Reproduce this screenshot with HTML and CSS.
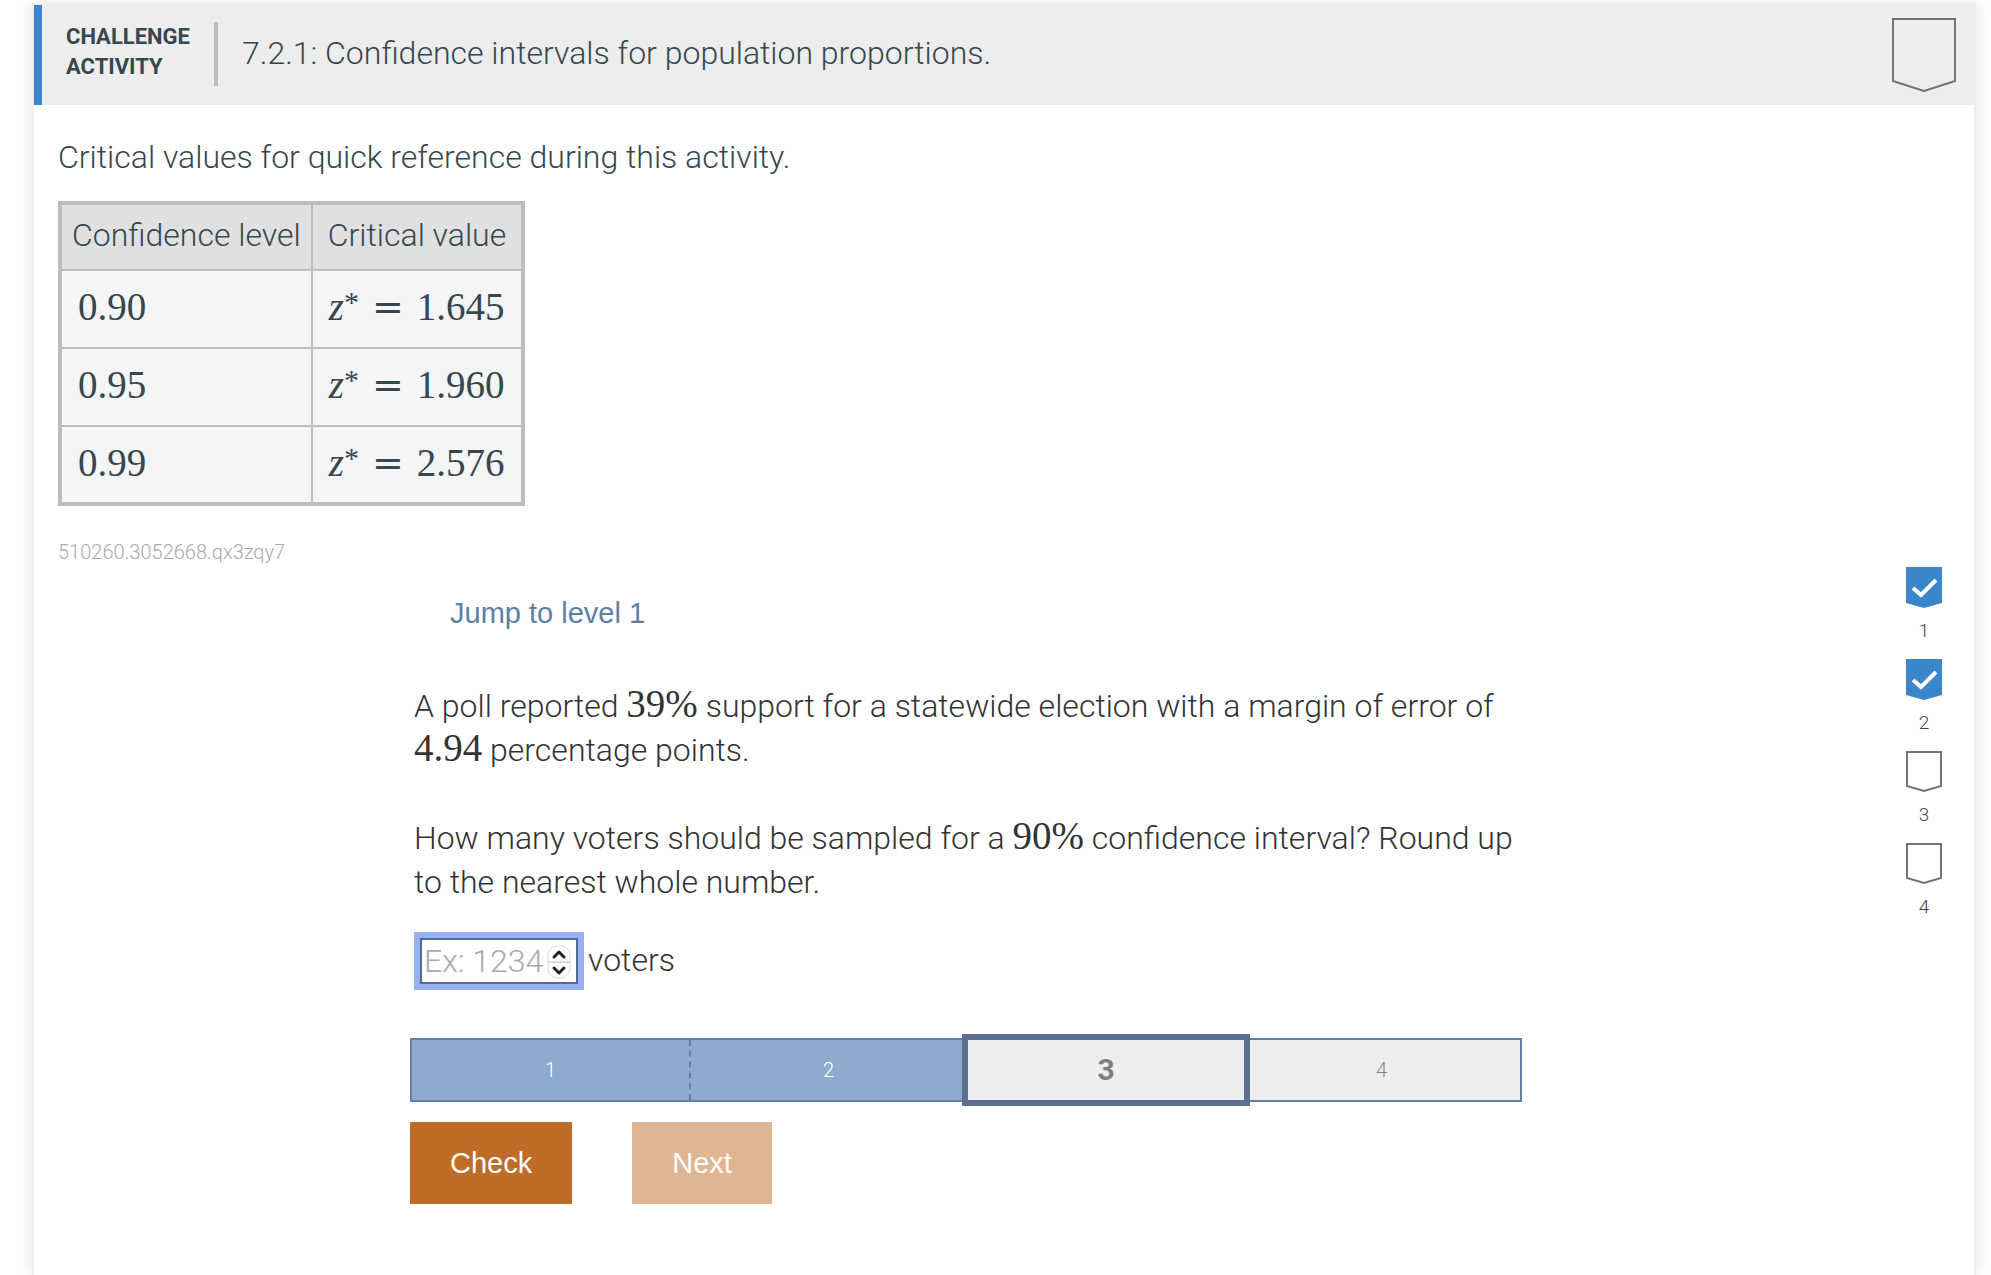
FILE: index.html
```html
<!DOCTYPE html>
<html lang="en">
<head>
    <meta charset="UTF-8">
    <meta name="viewport" content="width=device-width, initial-scale=1.0">
    <title>7.2.1: Confidence intervals for population proportions.</title>
    <link rel="stylesheet" href="styles.css">
</head>
<body>
    <main class="activity-card">
        <header class="activity-header">
            <div class="activity-type">CHALLENGE ACTIVITY</div>
            <h1 class="activity-title">7.2.1: Confidence intervals for population proportions.</h1>
            <svg class="header-chevron" width="64" height="74" viewBox="0 0 64 74">
                <path d="M1 1H63V63L32 73L1 63Z" fill="none" stroke="#757575" stroke-width="2"/>
            </svg>
        </header>

        <div class="activity-body">
            <p class="instructions">Critical values for quick reference during this activity.</p>

            <table class="values-table">
                <thead>
                    <tr><th>Confidence level</th><th>Critical value</th></tr>
                </thead>
                <tbody>
                    <tr>
                        <td><span class="math">0.90</span></td>
                        <td><span class="math"><i>z</i><sup>*</sup><span class="eq">=</span>1.645</span></td>
                    </tr>
                    <tr>
                        <td><span class="math">0.95</span></td>
                        <td><span class="math"><i>z</i><sup>*</sup><span class="eq">=</span>1.960</span></td>
                    </tr>
                    <tr>
                        <td><span class="math">0.99</span></td>
                        <td><span class="math"><i>z</i><sup>*</sup><span class="eq">=</span>2.576</span></td>
                    </tr>
                </tbody>
            </table>

            <div class="activity-id">510260.3052668.qx3zqy7</div>

            <div class="activity-content">
                <div class="tool-wrapper">
                    <form class="tool" id="toolForm">
                        <a class="jump-link" href="#level-1">Jump to level 1</a>

                        <div class="question">
                            <p>A poll reported <span class="math">39%</span> support for a statewide election with a margin of error of <span class="math">4.94</span> percentage points.</p>
                            <p>How many voters should be sampled for a <span class="math">90%</span> confidence interval? Round up to the nearest whole number.</p>
                        </div>

                        <div class="answer">
                            <div class="answer-box">
                                <input type="text" inputmode="numeric" id="voters" name="voters" placeholder="Ex: 1234">
                                <svg class="spinner" width="24" height="34" viewBox="0 0 24 34">
                                    <rect x="1" y="1" width="22" height="32" rx="9" fill="#fff" stroke="#dcdcdc"/>
                                    <path d="M1 17H23" stroke="#dcdcdc" stroke-width="2"/>
                                    <path d="M7 12L12 7L17 12M7 23L12 28L17 23" fill="none" stroke="#222" stroke-width="3" stroke-linecap="round" stroke-linejoin="round"/>
                                </svg>
                            </div>
                            <label for="voters">voters</label>
                        </div>

                        <div class="progress-bar">
                            <div class="segment done">1</div>
                            <div class="segment done">2</div>
                            <div class="segment current">3</div>
                            <div class="segment">4</div>
                        </div>

                        <div class="buttons">
                            <button type="submit" class="check-btn">Check</button>
                            <button type="button" class="next-btn" disabled>Next</button>
                        </div>
                    </form>
                </div>

                <ol class="levels">
                    <li>
                        <svg width="36" height="41" viewBox="0 0 36 41">
                            <path d="M0 0H36V36L18 41L0 36Z" fill="#3b86cb"/>
                            <path d="M7 21L15 28L30 13" fill="none" stroke="#fff" stroke-width="4"/>
                        </svg>
                        <span>1</span>
                    </li>
                    <li>
                        <svg width="36" height="41" viewBox="0 0 36 41">
                            <path d="M0 0H36V36L18 41L0 36Z" fill="#3b86cb"/>
                            <path d="M7 21L15 28L30 13" fill="none" stroke="#fff" stroke-width="4"/>
                        </svg>
                        <span>2</span>
                    </li>
                    <li>
                        <svg width="36" height="41" viewBox="0 0 36 41">
                            <path d="M1 1H35V35L18 40L1 35Z" fill="none" stroke="#757575" stroke-width="2"/>
                        </svg>
                        <span>3</span>
                    </li>
                    <li>
                        <svg width="36" height="41" viewBox="0 0 36 41">
                            <path d="M1 1H35V35L18 40L1 35Z" fill="none" stroke="#757575" stroke-width="2"/>
                        </svg>
                        <span>4</span>
                    </li>
                </ol>
            </div>
        </div>
    </main>

    <script>
        document.getElementById('toolForm').addEventListener('submit', (e) => {
            e.preventDefault();
        });
    </script>
</body>
</html>
```
FILE: styles.css
```css
* {
    margin: 0;
    padding: 0;
    box-sizing: border-box;
}

body {
    font-family: Roboto, sans-serif;
    font-size: 32px;
    font-weight: 300;
    line-height: 44px;
    color: #37474f;
    background: #fff;
    padding: 3px 15px 0 32px;
}

.activity-card {
    min-height: calc(100vh - 3px);
    border: 2px solid #ededed;
    border-bottom: none;
    background: #fff;
    box-shadow: 0 0 16px rgba(0, 0, 0, 0.12);
}

.activity-header {
    display: flex;
    align-items: flex-start;
    background: #ededed;
    border-left: 8px solid #3b86cb;
    height: 100px;
    padding: 13px 18px 0 24px;
}

.activity-type {
    width: 152px;
    height: 64px;
    margin-top: 4px;
    border-right: 4px solid #bdbdbd;
    font-size: 22px;
    font-weight: 700;
    line-height: 30px;
}

.activity-title {
    flex: 1;
    margin: 13px 0 0 24px;
    font-size: 32px;
    font-weight: 300;
    line-height: 44px;
}

.activity-body {
    padding: 30px 32px 40px 24px;
}

.values-table {
    margin-top: 22px;
    border: 4px solid #bdbdbd;
    border-collapse: collapse;
}

.values-table th,
.values-table td {
    border: 2px solid #bdbdbd;
    text-align: left;
    font-weight: 300;
}

.values-table th {
    height: 67px;
    padding: 0 10px 4px;
    background: #e0e0e0;
}

.values-table th + th {
    padding: 0 15px 4px;
}

.values-table td {
    height: 78px;
    padding: 0 16px;
    background: #f5f5f5;
}

.math {
    font-family: "Liberation Serif", serif;
    font-size: 39px;
    font-weight: 400;
    line-height: 1;
    white-space: nowrap;
}

.math sup {
    font-size: 30px;
    line-height: 0;
    vertical-align: 8px;
}

.math .eq {
    margin: 0 13px;
    font-family: "DejaVu Serif", serif;
    font-size: 38px;
    line-height: 0;
}

.activity-id {
    margin-top: 31px;
    font-size: 20px;
    font-weight: 300;
    line-height: 30px;
    color: #aaa;
}

.activity-content {
    display: flex;
}

.tool-wrapper {
    flex: 1;
    display: flex;
    justify-content: center;
    padding-right: 32px;
}

.tool {
    width: 100%;
    max-width: 1112px;
    color: #333;
}

.jump-link {
    display: inline-block;
    margin: 24px 0 0 40px;
    font-family: "Liberation Sans", sans-serif;
    font-size: 29px;
    color: #5f7ea3;
    text-decoration: none;
}

.question {
    padding: 0 4px;
    margin-top: 49px;
}

.question p + p {
    margin-top: 44px;
}

.answer {
    display: flex;
    align-items: center;
    gap: 10px;
    padding: 0 10px;
    margin-top: 34px;
}

.answer-box {
    position: relative;
    width: 158px;
    height: 46px;
}

.answer-box input {
    width: 100%;
    height: 100%;
    padding: 0 32px 0 2px;
    border: 2px solid #4f6a94;
    box-shadow: 0 0 0 6px #97b1f2;
    outline: none;
    font: inherit;
    color: #333;
}

.answer-box input::placeholder {
    color: #aaa;
    opacity: 1;
}

.spinner {
    position: absolute;
    top: 7px;
    right: 7px;
}

.answer label {
    padding-bottom: 2px;
}

.progress-bar {
    display: grid;
    grid-template-columns: repeat(4, 1fr);
    height: 64px;
    margin-top: 54px;
    border: 2px solid #6280a5;
    font-size: 20px;
}

.segment {
    display: flex;
    align-items: center;
    justify-content: center;
    background: #eee;
    color: #888;
}

.segment.done {
    background: #8faacf;
    color: #fff;
}

.segment.done + .done {
    border-left: 2px dashed #6280a5;
}

.segment.current {
    margin: -6px -7px -6px -4px;
    border: 6px solid #5d6e90;
    font-size: 30px;
    font-weight: 700;
    color: #808080;
    z-index: 1;
}

.buttons {
    display: flex;
    gap: 60px;
    margin-top: 20px;
}

.buttons button {
    height: 82px;
    padding: 0 40px;
    border: none;
    background: #bf6c28;
    color: #fff;
    font-family: "Liberation Sans", sans-serif;
    font-size: 29px;
    cursor: pointer;
}

.buttons .next-btn {
    background: #dfb593;
    cursor: default;
}

.levels {
    list-style: none;
    width: 36px;
    font-size: 19px;
    line-height: 24px;
    text-align: center;
}

.levels li {
    height: 92px;
}

.levels svg {
    display: block;
    margin-bottom: 11px;
}
```
